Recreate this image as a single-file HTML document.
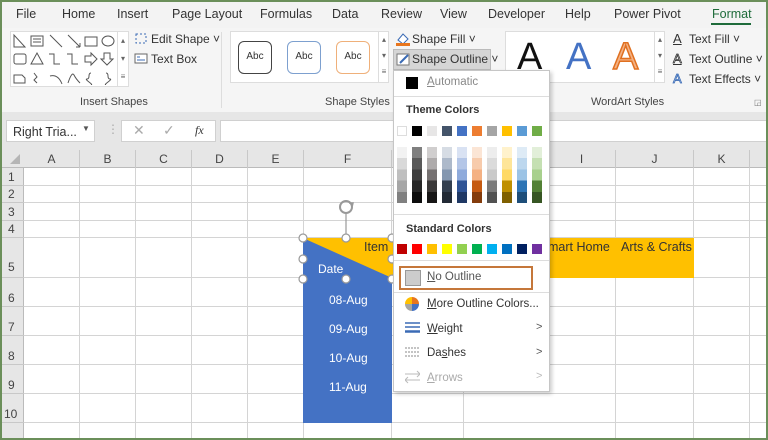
<!DOCTYPE html>
<html><head><meta charset="utf-8"><style>
*{box-sizing:border-box;margin:0;padding:0}
body{width:768px;height:440px;overflow:hidden;background:#fff;font-family:"Liberation Sans",sans-serif;font-size:12px;color:#333;position:relative}
.a{position:absolute}
.tab{position:absolute;top:7px;font-size:12.5px;color:#333}
.hl{position:absolute;background:#d4d4d4}
.vl{position:absolute;background:#d4d4d4;width:1px}
.ch{position:absolute;top:150px;height:18px;text-align:center;line-height:18px;font-size:12px;color:#444;border-right:1px solid #c8c8c8}
.rh{position:absolute;left:2px;width:22px;font-size:12px;color:#444;padding-left:6px;border-bottom:1px solid #c8c8c8}
.sw{position:absolute;width:10px;height:10px}
.mi{position:absolute;left:427px;font-size:11.5px;color:#333}
.arr{position:absolute;left:536px;font-size:11px;color:#555}
</style></head><body>
<!-- outer border -->
<div class="a" style="left:0;top:0;width:768px;height:440px;border:2px solid #6b8f5a;z-index:50;pointer-events:none"></div>
<!-- tabs -->
<div class="a" style="left:0;top:0;width:768px;height:28px;background:#f3f3f3"></div>
<div class="tab" style="left:16px">File</div>
<div class="tab" style="left:62px">Home</div>
<div class="tab" style="left:117px">Insert</div>
<div class="tab" style="left:172px">Page Layout</div>
<div class="tab" style="left:260px">Formulas</div>
<div class="tab" style="left:332px">Data</div>
<div class="tab" style="left:381px">Review</div>
<div class="tab" style="left:440px">View</div>
<div class="tab" style="left:488px">Developer</div>
<div class="tab" style="left:565px">Help</div>
<div class="tab" style="left:614px">Power Pivot</div>
<div class="tab" style="left:712px;color:#1e6b3a">Format</div>
<div class="a" style="left:711px;top:23px;width:40px;height:2px;background:#1e6b3a"></div>
<!-- ribbon -->
<div class="a" style="left:0;top:28px;width:768px;height:84px;background:#f5f5f5"></div>
<!-- insert shapes gallery -->
<div class="a" style="left:10px;top:31px;width:119px;height:56px;background:#fff;border:1px solid #ddd"></div>
<svg class="a" style="left:12px;top:33px" width="105" height="52" fill="none" stroke="#555" stroke-width="1">
<path d="M2 2 L2 14 L13 14 Z"/><rect x="19" y="3" width="12" height="10"/><path d="M21 6h8M21 9h8"/>
<path d="M38 2 L50 14"/><path d="M56 2 L68 14 M68 14l-4 0 M68 14l0-4"/><rect x="73" y="4" width="12" height="9"/><ellipse cx="96" cy="8" rx="6" ry="5"/>
<rect x="2" y="21" width="12" height="10" rx="2"/><path d="M19 31 L25 20 L31 31 Z"/><path d="M37 21h5v10h6"/><path d="M55 21h5v10h6"/><path d="M73 23h6v-3l6 6-6 6v-3h-6z"/><path d="M92 20h6v6h3l-6 6-6-6h3z"/>
<path d="M2 50v-8h8l3 3v5z"/><path d="M22 40l3 4-3 3 3 3"/><path d="M38 43q8-2 12 8"/><path d="M56 50q4-12 6-8t6 8"/><path d="M79 40q-2 0-2 3t-2 3 2 3 2 3"/><path d="M94 40q2 0 2 3t2 3-2 3-2 3"/>
</svg>
<div class="a" style="left:117px;top:32px;width:11px;height:54px;border-left:1px solid #ddd;font-size:8px;color:#666;text-align:center;line-height:18px">▴<br>▾<br>≡</div>
<svg class="a" style="left:134px;top:32px" width="14" height="13"><rect x="2" y="2" width="10" height="9" fill="none" stroke="#3b6bb5" stroke-dasharray="2 2"/></svg>
<div class="a" style="left:151px;top:32px;font-size:12px">Edit Shape ˅</div>
<svg class="a" style="left:134px;top:52px" width="14" height="13"><rect x="1" y="2" width="12" height="9" fill="#fff" stroke="#666"/><path d="M3 5h3M3 8h8" stroke="#3b6bb5"/></svg>
<div class="a" style="left:151px;top:52px;font-size:12px">Text Box</div>
<div class="a" style="left:80px;top:96px;font-size:11px;color:#444">Insert Shapes</div>
<div class="a" style="left:221px;top:32px;width:1px;height:76px;background:#ddd"></div>
<!-- shape styles -->
<div class="a" style="left:230px;top:31px;width:159px;height:52px;background:#fff;border:1px solid #ddd"></div>
<div class="a" style="left:238px;top:41px;width:34px;height:33px;border:1.5px solid #444;border-radius:6px;text-align:center;line-height:30px;font-size:10px">Abc</div>
<div class="a" style="left:287px;top:41px;width:34px;height:33px;border:1.5px solid #7da0cf;border-radius:6px;text-align:center;line-height:30px;font-size:10px">Abc</div>
<div class="a" style="left:336px;top:41px;width:34px;height:33px;border:1.5px solid #efb07a;border-radius:6px;text-align:center;line-height:30px;font-size:10px">Abc</div>
<div class="a" style="left:378px;top:32px;width:11px;height:50px;border-left:1px solid #ddd;font-size:8px;color:#666;text-align:center;line-height:16px">▴<br>▾<br>≡</div>
<div class="a" style="left:325px;top:96px;font-size:11px;color:#444">Shape Styles</div>
<svg class="a" style="left:395px;top:31px" width="16" height="16"><path d="M3 9l5-6 5 5-5 5z" fill="#fff" stroke="#3b6bb5"/><rect x="1" y="12" width="14" height="3" fill="#e8761e"/></svg>
<div class="a" style="left:412px;top:32px;font-size:12px">Shape Fill ˅</div>
<div class="a" style="left:393px;top:49px;width:98px;height:21px;background:#d5d5d5;border:1px solid #bbb"></div>
<svg class="a" style="left:396px;top:52px" width="16" height="15"><rect x="1" y="2" width="12" height="11" fill="#fff" stroke="#777"/><path d="M4 11l8-8" stroke="#3b6bb5" stroke-width="2"/></svg>
<div class="a" style="left:412px;top:52px;font-size:12px">Shape Outline ˅</div>
<!-- wordart -->
<div class="a" style="left:505px;top:31px;width:160px;height:52px;background:#fff;border:1px solid #ddd"></div>
<div class="a" style="left:517px;top:36px;font-size:38px;color:#111">A</div>
<div class="a" style="left:566px;top:36px;font-size:38px;color:#4472c4">A</div>
<div class="a" style="left:613px;top:36px;font-size:38px;color:#f4b183;-webkit-text-stroke:1.5px #e07020">A</div>
<div class="a" style="left:654px;top:32px;width:11px;height:50px;border-left:1px solid #ddd;font-size:8px;color:#666;text-align:center;line-height:16px">▴<br>▾<br>≡</div>
<div class="a" style="left:673px;top:31px;font-size:13px;text-decoration:underline">A</div>
<div class="a" style="left:689px;top:32px;font-size:12px">Text Fill ˅</div>
<div class="a" style="left:673px;top:51px;font-size:13px;color:#fff;-webkit-text-stroke:.8px #333;text-decoration:underline;text-decoration-color:#333">A</div>
<div class="a" style="left:689px;top:52px;font-size:12px">Text Outline ˅</div>
<div class="a" style="left:673px;top:71px;font-size:13px;color:#cfe0f5;-webkit-text-stroke:.8px #3b6bb5">A</div>
<div class="a" style="left:689px;top:72px;font-size:12px">Text Effects ˅</div>
<div class="a" style="left:591px;top:96px;font-size:11px;color:#444">WordArt Styles</div>
<div class="a" style="left:754px;top:98px;font-size:8px;color:#777">◲</div>
<!-- formula bar -->
<div class="a" style="left:0;top:112px;width:768px;height:38px;background:#e6e6e6"></div>
<div class="a" style="left:6px;top:120px;width:89px;height:22px;background:#fff;border:1px solid #d0d0d0;padding:4px 0 0 6px;font-size:12.5px">Right Tria...</div>
<div class="a" style="left:82px;top:124px;font-size:8px;color:#555">▼</div>
<div class="a" style="left:107px;top:122px;color:#aaa">⋮</div>
<div class="a" style="left:121px;top:120px;width:95px;height:22px;background:#fff;border:1px solid #d0d0d0"></div>
<div class="a" style="left:133px;top:122px;color:#aaa;font-size:14px">✕</div>
<div class="a" style="left:163px;top:122px;color:#aaa;font-size:14px">✓</div>
<div class="a" style="left:195px;top:123px;color:#333;font-family:'Liberation Serif',serif;font-style:italic;font-size:12px">fx</div>
<div class="a" style="left:220px;top:120px;width:548px;height:22px;background:#fff;border:1px solid #d0d0d0"></div>
<!-- grid header -->
<div class="a" style="left:2px;top:150px;width:766px;height:18px;background:#e6e6e6;border-bottom:1px solid #bbb"></div>
<div class="a" style="left:2px;top:168px;width:22px;height:270px;background:#e6e6e6;border-right:1px solid #bbb"></div>
<div class="a" style="left:10px;top:154px;width:0;height:0;border-left:10px solid transparent;border-bottom:10px solid #b5b5b5"></div>
<div class="ch" style="left:24px;width:56px">A</div>
<div class="ch" style="left:80px;width:56px">B</div>
<div class="ch" style="left:136px;width:56px">C</div>
<div class="ch" style="left:192px;width:56px">D</div>
<div class="ch" style="left:248px;width:56px">E</div>
<div class="ch" style="left:304px;width:88px">F</div>
<div class="ch" style="left:392px;width:156px"></div>
<div class="ch" style="left:548px;width:68px">I</div>
<div class="ch" style="left:616px;width:78px">J</div>
<div class="ch" style="left:694px;width:56px">K</div>
<!-- vertical lines -->
<div class="vl" style="left:79px;top:168px;height:270px"></div>
<div class="vl" style="left:135px;top:168px;height:270px"></div>
<div class="vl" style="left:191px;top:168px;height:270px"></div>
<div class="vl" style="left:247px;top:168px;height:270px"></div>
<div class="vl" style="left:303px;top:168px;height:270px"></div>
<div class="vl" style="left:391px;top:168px;height:270px"></div>
<div class="vl" style="left:463px;top:168px;height:270px"></div>
<div class="vl" style="left:615px;top:168px;height:270px"></div>
<div class="vl" style="left:693px;top:168px;height:270px"></div>
<div class="vl" style="left:749px;top:168px;height:270px"></div>
<!-- rows -->
<div class="rh" style="top:168px;height:18px;line-height:18px">1</div>
<div class="rh" style="top:186px;height:17px;line-height:17px">2</div>
<div class="rh" style="top:203px;height:18px;line-height:18px">3</div>
<div class="rh" style="top:221px;height:17px;line-height:17px">4</div>
<div class="rh" style="top:238px;height:40px;line-height:58px">5</div>
<div class="rh" style="top:278px;height:29px;line-height:40px">6</div>
<div class="rh" style="top:307px;height:29px;line-height:40px">7</div>
<div class="rh" style="top:336px;height:29px;line-height:40px">8</div>
<div class="rh" style="top:365px;height:29px;line-height:40px">9</div>
<div class="rh" style="top:394px;height:29px;line-height:40px;padding-left:2px">10</div>
<div class="hl" style="left:24px;top:185px;width:744px;height:1px"></div>
<div class="hl" style="left:24px;top:202px;width:744px;height:1px"></div>
<div class="hl" style="left:24px;top:220px;width:744px;height:1px"></div>
<div class="hl" style="left:24px;top:237px;width:744px;height:1px"></div>
<div class="hl" style="left:24px;top:277px;width:744px;height:1px"></div>
<div class="hl" style="left:24px;top:306px;width:744px;height:1px"></div>
<div class="hl" style="left:24px;top:335px;width:744px;height:1px"></div>
<div class="hl" style="left:24px;top:364px;width:744px;height:1px"></div>
<div class="hl" style="left:24px;top:393px;width:744px;height:1px"></div>
<div class="hl" style="left:24px;top:422px;width:744px;height:1px"></div>
<!-- yellow row -->
<div class="a" style="left:392px;top:238px;width:302px;height:40px;background:#ffc000"></div>
<div class="a" style="left:548px;top:240px;font-size:12.5px;color:#333">mart Home</div>
<div class="a" style="left:621px;top:240px;font-size:12.5px;color:#333">Arts &amp; Crafts</div>
<!-- shape -->
<div class="a" style="left:303px;top:238px;width:89px;height:185px;background:#4472c4"></div>
<svg class="a" style="left:303px;top:238px" width="89" height="40"><path d="M0 0H89V40Z" fill="#ffc000"/></svg>
<div class="a" style="left:364px;top:240px;font-size:12.5px;color:#333">Item</div>
<div class="a" style="left:318px;top:262px;font-size:12px;color:#fff">Date</div>
<div class="a" style="left:329px;top:293px;font-size:12px;color:#fff">08-Aug</div>
<div class="a" style="left:329px;top:322px;font-size:12px;color:#fff">09-Aug</div>
<div class="a" style="left:329px;top:351px;font-size:12px;color:#fff">10-Aug</div>
<div class="a" style="left:329px;top:380px;font-size:12px;color:#fff">11-Aug</div>
<svg class="a" style="left:295px;top:196px" width="105" height="90" fill="#fff" stroke="#999" stroke-width="1.2">
<path d="M51 42V16" fill="none"/>
<circle cx="51" cy="11" r="6" fill="none" stroke-width="2"/><path d="M54 7l4 0-1 4" fill="none" stroke-width="1.5"/>
<circle cx="8" cy="42" r="4"/><circle cx="51" cy="42" r="4"/><circle cx="97" cy="42" r="4"/>
<circle cx="8" cy="63" r="4"/><circle cx="97" cy="63" r="4"/>
<circle cx="8" cy="83" r="4"/><circle cx="51" cy="83" r="4"/><circle cx="97" cy="83" r="4"/>
</svg>
<!-- menu -->
<div class="a" style="left:393px;top:70px;width:157px;height:322px;background:#fff;border:1px solid #c6c6c6;box-shadow:2px 2px 4px rgba(0,0,0,.2)"></div>
<div class="a" style="left:406px;top:77px;width:12px;height:12px;background:#000"></div>
<div class="a" style="left:427px;top:76px;font-size:11.5px;color:#888"><u>A</u>utomatic</div>
<div class="a" style="left:394px;top:96px;width:155px;height:1px;background:#ddd"></div>
<div class="a" style="left:406px;top:104px;font-size:11px;font-weight:bold;color:#333">Theme Colors</div>
<div class="sw" style="left:397px;top:126px;background:#fff;border:1px solid #ddd"></div>
<div class="sw" style="left:412px;top:126px;background:#000"></div>
<div class="sw" style="left:427px;top:126px;background:#e7e6e6"></div>
<div class="sw" style="left:442px;top:126px;background:#44546a"></div>
<div class="sw" style="left:457px;top:126px;background:#4472c4"></div>
<div class="sw" style="left:472px;top:126px;background:#ed7d31"></div>
<div class="sw" style="left:487px;top:126px;background:#a5a5a5"></div>
<div class="sw" style="left:502px;top:126px;background:#ffc000"></div>
<div class="sw" style="left:517px;top:126px;background:#5b9bd5"></div>
<div class="sw" style="left:532px;top:126px;background:#70ad47"></div>
<div class="a" style="left:397px;top:147px;width:10px;height:56px;background:linear-gradient(#f2f2f2 0 20%,#d9d9d9 20% 40%,#bfbfbf 40% 60%,#a6a6a6 60% 80%,#808080 80%)"></div>
<div class="a" style="left:412px;top:147px;width:10px;height:56px;background:linear-gradient(#7f7f7f 0 20%,#595959 20% 40%,#3f3f3f 40% 60%,#262626 60% 80%,#0d0d0d 80%)"></div>
<div class="a" style="left:427px;top:147px;width:10px;height:56px;background:linear-gradient(#d0cece 0 20%,#aeabab 20% 40%,#757171 40% 60%,#3a3838 60% 80%,#171616 80%)"></div>
<div class="a" style="left:442px;top:147px;width:10px;height:56px;background:linear-gradient(#d6dce4 0 20%,#adb9ca 20% 40%,#8497b0 40% 60%,#333f4f 60% 80%,#222a35 80%)"></div>
<div class="a" style="left:457px;top:147px;width:10px;height:56px;background:linear-gradient(#d9e2f3 0 20%,#b4c6e7 20% 40%,#8eaadb 40% 60%,#2f5496 60% 80%,#1f3864 80%)"></div>
<div class="a" style="left:472px;top:147px;width:10px;height:56px;background:linear-gradient(#fbe5d5 0 20%,#f7cbac 20% 40%,#f4b183 40% 60%,#c55a11 60% 80%,#843c0c 80%)"></div>
<div class="a" style="left:487px;top:147px;width:10px;height:56px;background:linear-gradient(#ededed 0 20%,#dbdbdb 20% 40%,#c9c9c9 40% 60%,#7b7b7b 60% 80%,#525252 80%)"></div>
<div class="a" style="left:502px;top:147px;width:10px;height:56px;background:linear-gradient(#fff2cc 0 20%,#fee599 20% 40%,#ffd965 40% 60%,#bf9000 60% 80%,#7f6000 80%)"></div>
<div class="a" style="left:517px;top:147px;width:10px;height:56px;background:linear-gradient(#deebf6 0 20%,#bdd7ee 20% 40%,#9cc3e5 40% 60%,#2e75b5 60% 80%,#1e4e79 80%)"></div>
<div class="a" style="left:532px;top:147px;width:10px;height:56px;background:linear-gradient(#e2efd9 0 20%,#c5e0b3 20% 40%,#a8d08d 40% 60%,#538135 60% 80%,#375623 80%)"></div>
<div class="a" style="left:394px;top:214px;width:155px;height:1px;background:#ddd"></div>
<div class="a" style="left:406px;top:223px;font-size:11px;font-weight:bold;color:#333">Standard Colors</div>
<div class="sw" style="left:397px;top:244px;background:#c00000"></div>
<div class="sw" style="left:412px;top:244px;background:#ff0000"></div>
<div class="sw" style="left:427px;top:244px;background:#ffc000"></div>
<div class="sw" style="left:442px;top:244px;background:#ffff00"></div>
<div class="sw" style="left:457px;top:244px;background:#92d050"></div>
<div class="sw" style="left:472px;top:244px;background:#00b050"></div>
<div class="sw" style="left:487px;top:244px;background:#00b0f0"></div>
<div class="sw" style="left:502px;top:244px;background:#0070c0"></div>
<div class="sw" style="left:517px;top:244px;background:#002060"></div>
<div class="sw" style="left:532px;top:244px;background:#7030a0"></div>
<div class="a" style="left:394px;top:260px;width:155px;height:1px;background:#ddd"></div>
<div class="a" style="left:399px;top:266px;width:134px;height:24px;border:2px solid #c5773a"></div>
<div class="a" style="left:405px;top:270px;width:16px;height:16px;background:#ccc;border:1px solid #999"></div>
<div class="a" style="left:427px;top:271px;font-size:11.5px;color:#555"><u>N</u>o Outline</div>
<div class="a" style="left:394px;top:292px;width:155px;height:1px;background:#ddd"></div>
<div class="a" style="left:405px;top:297px;width:14px;height:14px;border-radius:50%;background:conic-gradient(#e8761e 0 25%,#4472c4 25% 50%,#a5a5a5 50% 75%,#ffc000 75%)"></div>
<div class="mi" style="top:298px"><u>M</u>ore Outline Colors...</div>
<svg class="a" style="left:405px;top:321px" width="15" height="14"><path d="M0 2h15M0 6h15" stroke="#3b6bb5" stroke-width="1.5"/><path d="M0 10.5h15" stroke="#3b6bb5" stroke-width="2.5"/></svg>
<div class="mi" style="top:323px"><u>W</u>eight</div>
<div class="arr" style="top:321px">&gt;</div>
<svg class="a" style="left:405px;top:346px" width="15" height="14"><path d="M0 2h15M0 6h15M0 10h15" stroke="#888" stroke-dasharray="2 1"/></svg>
<div class="mi" style="top:347px">Da<u>s</u>hes</div>
<div class="arr" style="top:346px">&gt;</div>
<svg class="a" style="left:405px;top:370px" width="15" height="14"><path d="M0 4h15M12 1l3 3-3 3M0 10h15M3 7l-3 3 3 3" stroke="#bbb" fill="none"/></svg>
<div class="mi" style="top:372px;color:#aaa"><u>A</u>rrows</div>
<div class="arr" style="top:370px;color:#bbb">&gt;</div>
</body></html>
